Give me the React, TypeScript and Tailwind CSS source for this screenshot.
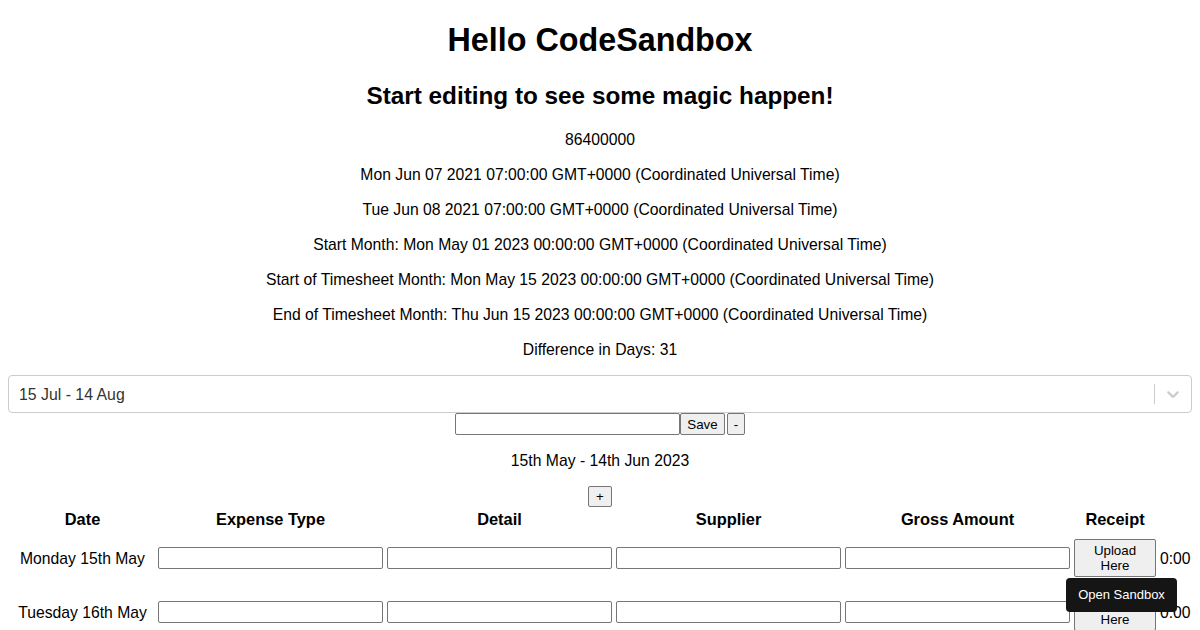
import React from "react";

const lines = [
  "86400000",
  "Mon Jun 07 2021 07:00:00 GMT+0000 (Coordinated Universal Time)",
  "Tue Jun 08 2021 07:00:00 GMT+0000 (Coordinated Universal Time)",
  "Start Month: Mon May 01 2023 00:00:00 GMT+0000 (Coordinated Universal Time)",
  "Start of Timesheet Month: Mon May 15 2023 00:00:00 GMT+0000 (Coordinated Universal Time)",
  "End of Timesheet Month: Thu Jun 15 2023 00:00:00 GMT+0000 (Coordinated Universal Time)",
  "Difference in Days: 31",
];

const rows = ["Monday 15th May", "Tuesday 16th May"];

const btn =
  "bg-[#efefef] border border-[#767676] rounded-[2px] text-[13.33px] leading-[15px] text-black";
const field = "bg-white border border-[#767676] rounded-[2px] h-[22px] w-[225px] block";

function Chevron() {
  return (
    <svg width="20" height="20" viewBox="0 0 20 20" fill="#cccccc">
      <path d="M4.516 7.548c0.436-0.446 1.043-0.481 1.576 0l3.908 3.747 3.908-3.747c0.533-0.481 1.141-0.446 1.574 0 0.436 0.445 0.408 1.197 0 1.615-0.406 0.418-4.695 4.502-4.695 4.502-0.217 0.223-0.502 0.335-0.787 0.335s-0.57-0.112-0.789-0.335c0 0-4.287-4.084-4.695-4.502s-0.436-1.17 0-1.615z" />
    </svg>
  );
}

export default function App() {
  return (
    <div className="relative w-[1200px] h-[630px] overflow-hidden bg-white text-black text-center font-['Liberation_Sans',Arial,sans-serif]">
      <div className="flex flex-col px-[8px]">
        <h1 className="mt-[22px] text-[32.3px] leading-[37px] font-bold">Hello CodeSandbox</h1>
        <h2 className="mt-[23px] text-[24.3px] leading-[28px] font-bold">
          Start editing to see some magic happen!
        </h2>
        <div className="mt-[4px] flex flex-col">
          {lines.map((t) => (
            <p key={t} className="mt-[16px] text-[15.72px] leading-[19px]">
              {t}
            </p>
          ))}
        </div>

        {/* period picker */}
        <div className="mt-[16px] h-[38px] flex items-center border border-[#cccccc] rounded-[4px] text-left">
          <div className="flex-1 pl-[10px] pt-[2px] text-[15.85px] text-[#333333]">15 Jul - 14 Aug</div>
          <div className="w-px h-[20px] bg-[#cccccc]" />
          <div className="p-[8px]">
            <Chevron />
          </div>
        </div>

        <div className="flex justify-center">
          <input className={field} />
          <button className={`${btn} w-[45px] h-[22px]`}>Save</button>
          <button className={`${btn} ml-[2px] w-[18px] h-[22px]`}>-</button>
        </div>

        <p className="mt-[16px] text-[15.72px] leading-[19px]">15th May - 14th Jun 2023</p>

        <div className="mt-[16px] flex justify-center">
          <button className={`${btn} w-[24px] h-[21px]`}>+</button>
        </div>

        <table className="w-full table-fixed border-separate border-spacing-[2px] text-[15.72px] leading-[19px]">
          <thead className="text-[16.4px]">
            <tr>
              <th className="w-[145px] p-px font-bold">Date</th>
              <th className="w-[227px] p-px font-bold">Expense Type</th>
              <th className="w-[227px] p-px font-bold">Detail</th>
              <th className="w-[227px] p-px font-bold">Supplier</th>
              <th className="w-[227px] p-px font-bold">Gross Amount</th>
              <th className="w-[84px] p-px font-bold">Receipt</th>
              <th className="p-px" />
            </tr>
          </thead>
          <tbody>
            {rows.map((d) => (
              <tr key={d}>
                <td className="h-[52px] p-px align-middle">{d}</td>
                {[0, 1, 2, 3].map((i) => (
                  <td key={i} className="p-px align-middle">
                    <input className={field} />
                  </td>
                ))}
                <td className="p-px align-middle">
                  <button className={`${btn} w-[82px] h-[38px]`}>
                    Upload
                    <br />
                    Here
                  </button>
                </td>
                <td className="p-px align-middle whitespace-nowrap text-left">0:00</td>
              </tr>
            ))}
          </tbody>
        </table>
      </div>

      <div className="absolute left-[1066px] top-[578px] w-[111px] h-[34px] flex items-center justify-center rounded-[4px] bg-[#151515] text-white text-[13px]">
        Open Sandbox
      </div>
    </div>
  );
}
